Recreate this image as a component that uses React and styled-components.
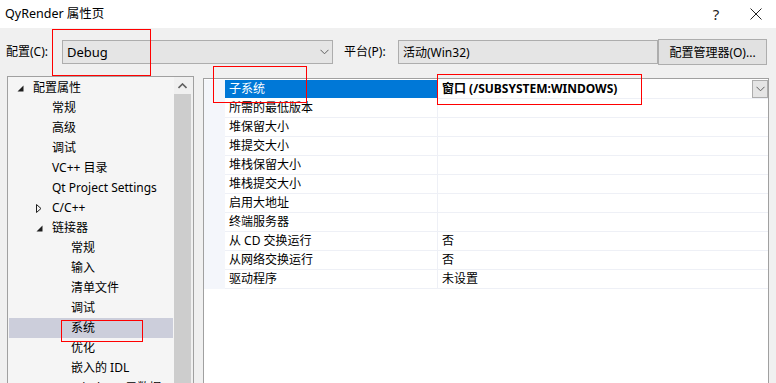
import React from 'react'
import { styled, createGlobalStyle } from 'styled-components'

const GlobalStyle = createGlobalStyle`
  html, body {
    margin: 0;
    padding: 0;
    overflow: hidden;
  }
  body {
    font-family: "Noto Sans", "Noto Sans CJK SC", sans-serif;
    font-size: 12px;
    color: #000;
  }
`

const Window = styled.div`
  position: relative;
  width: 776px;
  height: 383px;
  background: #f0f0f0;
  display: flex;
  flex-direction: column;
  overflow: hidden;
`

const TitleBar = styled.div`
  height: 28px;
  flex: none;
  background: #fff;
  display: flex;
  align-items: center;
  padding-left: 5px;
`

const Title = styled.div`
  flex: 1;
  font-size: 12.5px;
  line-height: 16px;
`

const TitleButton = styled.div`
  width: 40px;
  height: 28px;
  display: flex;
  align-items: center;
  justify-content: center;
  font-size: 15px;
  color: #222;
`

const Toolbar = styled.div`
  height: 48px;
  flex: none;
  display: flex;
  align-items: flex-start;
  padding: 11px 0 0 6px;
  box-sizing: border-box;
`

const Label = styled.div`
  width: ${p => p.$w}px;
  height: 26px;
  line-height: 26px;
  font-size: 12px;
`

const Combo = styled.div`
  width: ${p => p.$w}px;
  height: 24px;
  margin-top: 1px;
  box-sizing: border-box;
  background: #e5e5e5;
  border: 1px solid #adadad;
  display: flex;
  align-items: center;
  padding-left: 4px;
  font-size: 12px;
`

const ComboText = styled.div`
  flex: 1;
  font-size: ${p => p.$size || 12}px;
`

const Chevron = styled.div`
  width: 16px;
  display: flex;
  align-items: center;
  justify-content: center;
`

const Button = styled.div`
  width: 109px;
  height: 26px;
  box-sizing: border-box;
  background: #e1e1e1;
  border: 1px solid #adadad;
  display: flex;
  align-items: center;
  justify-content: center;
  font-size: 12px;
`

const Main = styled.div`
  flex: 1;
  display: flex;
  align-items: stretch;
  padding-left: 7px;
  min-height: 0;
`

const TreePanel = styled.div`
  width: 187px;
  flex: none;
  box-sizing: border-box;
  border: 1px solid #a0a0a0;
  border-bottom: none;
  background: #f5f5f5;
  display: flex;
  overflow: hidden;
`

const TreeList = styled.div`
  flex: 1;
  padding-top: 1px;
  overflow: hidden;
`

const TreeRow = styled.div`
  height: 20px;
  margin: 0 1px;
  display: flex;
  align-items: center;
  padding-left: ${p => 5 + p.$level * 19}px;
  background: ${p => (p.$selected ? '#cccedb' : 'transparent')};
  white-space: nowrap;
`

const Expander = styled.div`
  width: 19px;
  height: 20px;
  flex: none;
  display: flex;
  align-items: center;
  padding-left: 3px;
  box-sizing: border-box;
`

const TreeText = styled.div`
  line-height: 20px;
  font-size: 12px;
`

const ScrollBar = styled.div`
  width: 17px;
  flex: none;
  display: flex;
  flex-direction: column;
  background: #f0f0f0;
  padding-right: 2px;
`

const ScrollArrow = styled.div`
  height: 17px;
  display: flex;
  align-items: center;
  justify-content: center;
`

const ScrollThumb = styled.div`
  flex: 1;
  background: #cdcdcd;
`

const Grid = styled.div`
  width: 566px;
  margin-left: 9px;
  margin-top: 2px;
  box-sizing: border-box;
  border: 1px solid #a0a0a0;
  border-bottom: none;
  background: #fff;
  display: flex;
  flex-direction: column;
  padding-top: 1px;
  overflow: hidden;
`

const GridRow = styled.div`
  display: flex;
  height: 19px;
  flex: none;
`

const Gutter = styled.div`
  width: 21px;
  flex: none;
  background: #f4f6fb;
`

const NameCell = styled.div`
  width: 213px;
  flex: none;
  box-sizing: border-box;
  padding-left: 4px;
  line-height: 18px;
  border-bottom: 1px solid ${p => (p.$active ? '#fff' : '#eef0f6')};
  border-right: 1px solid #eef0f6;
  background: ${p => (p.$active ? '#0078d7' : '#fff')};
  color: ${p => (p.$active ? '#fff' : '#000')};
  white-space: nowrap;
`

const ValueCell = styled.div`
  flex: 1;
  display: flex;
  box-sizing: border-box;
  padding-left: 4px;
  line-height: 18px;
  border-bottom: 1px solid #eef0f6;
  font-weight: ${p => (p.$bold ? 700 : 400)};
  white-space: nowrap;
`

const ValueText = styled.div`
  flex: 1;
`

const DropButton = styled.div`
  width: 16px;
  height: 18px;
  box-sizing: border-box;
  background: #e5e5e5;
  border: 1px solid #adadad;
  display: flex;
  align-items: center;
  justify-content: center;
`

const Mark = styled.div`
  position: absolute;
  left: ${p => p.$x}px;
  top: ${p => p.$y}px;
  width: ${p => p.$w}px;
  height: ${p => p.$h}px;
  border: 1px solid #ff0000;
  box-sizing: border-box;
  pointer-events: none;
`

const ChevronDown = ({ color = '#606060' }) => (
  <svg width="9" height="6" viewBox="0 0 9 6">
    <path d="M0.5 0.8 L4.5 4.8 L8.5 0.8" fill="none" stroke={color} strokeWidth="1" />
  </svg>
)

const Expanded = () => (
  <svg width="7" height="7" viewBox="0 0 7 7">
    <path d="M6.5 0.5 L6.5 6.5 L0.5 6.5 Z" fill="#1e1e1e" />
  </svg>
)

const Collapsed = () => (
  <svg width="6" height="9" viewBox="0 0 6 9">
    <path d="M0.5 0.5 L5 4.5 L0.5 8.5 Z" fill="none" stroke="#1e1e1e" strokeWidth="1" />
  </svg>
)

const tree = [
  { text: '配置属性', level: 0, exp: 'open' },
  { text: '常规', level: 1 },
  { text: '高级', level: 1 },
  { text: '调试', level: 1 },
  { text: 'VC++ 目录', level: 1 },
  { text: 'Qt Project Settings', level: 1 },
  { text: 'C/C++', level: 1, exp: 'closed' },
  { text: '链接器', level: 1, exp: 'open' },
  { text: '常规', level: 2 },
  { text: '输入', level: 2 },
  { text: '清单文件', level: 2 },
  { text: '调试', level: 2 },
  { text: '系统', level: 2, selected: true },
  { text: '优化', level: 2 },
  { text: '嵌入的 IDL', level: 2 },
  { text: 'Windows 元数据', level: 2 },
]

const props = [
  ['子系统', '窗口 (/SUBSYSTEM:WINDOWS)'],
  ['所需的最低版本', ''],
  ['堆保留大小', ''],
  ['堆提交大小', ''],
  ['堆栈保留大小', ''],
  ['堆栈提交大小', ''],
  ['启用大地址', ''],
  ['终端服务器', ''],
  ['从 CD 交换运行', '否'],
  ['从网络交换运行', '否'],
  ['驱动程序', '未设置'],
]

export default function App() {
  return (
    <>
      <GlobalStyle />
      <Window>
        <TitleBar>
          <Title>QyRender 属性页</Title>
          <TitleButton>?</TitleButton>
          <TitleButton>
            <svg width="12" height="12" viewBox="0 0 12 12">
              <path d="M0.5 0.5 L11.5 11.5 M11.5 0.5 L0.5 11.5" stroke="#222" strokeWidth="1" />
            </svg>
          </TitleButton>
        </TitleBar>

        <Toolbar>
          <Label $w={56}>配置(C):</Label>
          <Combo $w={271}>
            <ComboText $size={13}>Debug</ComboText>
            <Chevron><ChevronDown /></Chevron>
          </Combo>
          <Label $w={54} style={{ marginLeft: 11 }}>平台(P):</Label>
          <Combo $w={260}>
            <ComboText>活动(Win32)</ComboText>
          </Combo>
          <Button>配置管理器(O)...</Button>
        </Toolbar>

        <Main>
          <TreePanel>
            <TreeList>
              {tree.map((t, i) => (
                <TreeRow key={i} $level={t.level} $selected={t.selected}>
                  <Expander>
                    {t.exp === 'open' && <Expanded />}
                    {t.exp === 'closed' && <Collapsed />}
                  </Expander>
                  <TreeText>{t.text}</TreeText>
                </TreeRow>
              ))}
            </TreeList>
            <ScrollBar>
              <ScrollArrow>
                <svg width="9" height="6" viewBox="0 0 9 6">
                  <path d="M0.5 5 L4.5 1 L8.5 5" fill="none" stroke="#606060" strokeWidth="1.6" />
                </svg>
              </ScrollArrow>
              <ScrollThumb />
            </ScrollBar>
          </TreePanel>

          <Grid>
            {props.map(([name, value], i) => (
              <GridRow key={i}>
                <Gutter />
                <NameCell $active={i === 0}>{name}</NameCell>
                <ValueCell $bold={i === 0}>
                  <ValueText>{value}</ValueText>
                  {i === 0 && <DropButton><ChevronDown /></DropButton>}
                </ValueCell>
              </GridRow>
            ))}
          </Grid>
        </Main>

        <Mark $x={52} $y={29} $w={99} $h={47} />
        <Mark $x={213} $y={66} $w={94} $h={37} />
        <Mark $x={437} $y={74} $w={205} $h={31} />
        <Mark $x={61} $y={320} $w={82} $h={22} />
      </Window>
    </>
  )
}
